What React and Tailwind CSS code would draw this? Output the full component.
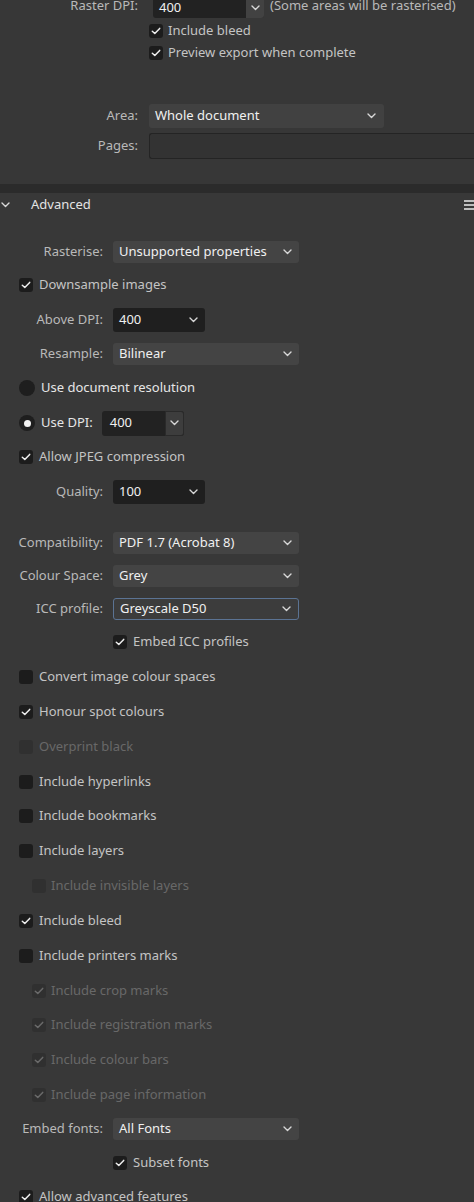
import React from "react";

const FONT = { fontFamily: '"Noto Sans", "Open Sans", sans-serif' };

function Chevron({ className = "" }) {
  return (
    <svg width="9" height="6" viewBox="0 0 9 6" className={className}>
      <polyline points="1,1 4.5,4.5 8,1" fill="none" stroke="#d8d8d8" strokeWidth="1.4" strokeLinecap="round" strokeLinejoin="round" />
    </svg>
  );
}

function Check({ checked, disabled }) {
  return (
    <div
      className={
        "w-[14px] h-[14px] rounded-[3px] flex items-center justify-center shrink-0 " +
        (disabled ? "bg-[#303030]" : "bg-[#1c1c1c]")
      }
    >
      {checked && (
        <svg width="10" height="8" viewBox="0 0 10 8">
          <polyline
            points="1.3,4.2 3.8,6.5 8.7,1.4"
            fill="none"
            stroke={disabled ? "#6a6a6a" : "#ededed"}
            strokeWidth="1.5"
            strokeLinecap="round"
            strokeLinejoin="round"
          />
        </svg>
      )}
    </div>
  );
}

function CheckRow({ mt, checked, disabled, indent, label }) {
  return (
    <div className={"flex items-center h-[24px] " + mt + " " + (indent ? "pl-[32px] gap-[5px]" : "pl-[19px] gap-[6px]")}>
      <Check checked={checked} disabled={disabled} />
      <span className={"text-[13px] " + (disabled ? "text-[#686868]" : "text-[#c4c4c4]")}>{label}</span>
    </div>
  );
}

function Select({ value, width, dark, focus }) {
  return (
    <div
      className={
        "h-[22px] rounded-[3px] flex items-center justify-between pl-[6px] pr-[7px] " +
        width +
        " " +
        (dark ? "bg-[#1f1f1f] h-[24px]" : focus ? "bg-[#3c3c3c] border border-[#5b7393]" : "bg-[#444444]")
      }
    >
      <span className="text-[13px] text-[#f0f0f0]">{value}</span>
      <Chevron />
    </div>
  );
}

function LabelRow({ mt, label, children }) {
  return (
    <div className={"flex items-center h-[24px] " + mt}>
      <div className="w-[103px] text-right text-[13px] text-[#b9b9b9] shrink-0">{label}</div>
      <div className="ml-[10px]">{children}</div>
    </div>
  );
}

export default function App() {
  return (
    <div className="w-[474px] h-[1202px] overflow-hidden bg-[#383838] select-none" style={FONT}>
      {/* Top section */}
      <div className="bg-[#373737]">
        <div className="flex items-center h-[24px] -mt-[6px]">
          <div className="w-[138px] text-right text-[13px] text-[#b9b9b9]">Raster DPI:</div>
          <div className="ml-[15px] w-[111px] h-[24px] rounded-[3px] bg-[#222222] flex">
            <div className="flex-1 flex items-center pl-[6px] pt-[3px] text-[13px] text-[#f0f0f0]">400</div>
            <div className="w-[18px] bg-[#424242] rounded-r-[3px] flex items-center justify-center pt-[3px]">
              <Chevron />
            </div>
          </div>
          <span className="ml-[6px] text-[13px] text-[#b9b9b9] whitespace-nowrap">(Some areas will be rasterised)</span>
        </div>
        <div className="flex items-center h-[22px] mt-[2px] pl-[149px] gap-[5px]">
          <Check checked />
          <span className="text-[13px] text-[#c4c4c4]">Include bleed</span>
        </div>
        <div className="flex items-center h-[22px] pl-[149px] gap-[5px]">
          <Check checked />
          <span className="text-[13px] text-[#c4c4c4]">Preview export when complete</span>
        </div>
        <div className="flex items-center h-[24px] mt-[40px]">
          <div className="w-[138px] text-right text-[13px] text-[#b9b9b9]">Area:</div>
          <div className="ml-[11px] w-[235px] h-[24px] rounded-[3px] bg-[#414141] flex items-center justify-between pl-[6px] pr-[8px]">
            <span className="text-[13px] text-[#f0f0f0]">Whole document</span>
            <Chevron />
          </div>
        </div>
        <div className="flex items-center h-[26px] mt-[5px]">
          <div className="w-[138px] text-right text-[13px] text-[#b9b9b9]">Pages:</div>
          <div className="ml-[11px] flex-1 h-[26px] rounded-l-[3px] bg-[#333333] border border-r-0 border-[#242424]" />
        </div>
        <div className="h-[25px]" />
      </div>
      <div className="h-[9px] bg-[#2b2b2b]" />
      {/* Advanced header */}
      <div className="h-[23px] flex items-center relative">
        <div className="pl-[1px] w-[31px]">
          <Chevron />
        </div>
        <span className="text-[13px] text-[#e4e4e4]">Advanced</span>
        <div className="ml-auto flex flex-col gap-[2px] w-[10px] pt-[1px]">
          <div className="h-[2px] bg-[#bdbdbd]" />
          <div className="h-[2px] bg-[#bdbdbd]" />
          <div className="h-[2px] bg-[#bdbdbd]" />
        </div>
      </div>

      <LabelRow mt="mt-[24px]" label="Rasterise:">
        <Select value="Unsupported properties" width="w-[186px]" />
      </LabelRow>
      <CheckRow mt="mt-[9px]" checked label="Downsample images" />
      <LabelRow mt="mt-[11px]" label="Above DPI:">
        <Select value="400" width="w-[92px]" dark />
      </LabelRow>
      <LabelRow mt="mt-[10px]" label="Resample:">
        <Select value="Bilinear" width="w-[186px]" />
      </LabelRow>
      <div className="flex items-center h-[24px] mt-[10px] pl-[19px] gap-[6px]">
        <div className="w-[16px] h-[16px] rounded-full bg-[#1e1e1e]" />
        <span className="text-[13px] text-[#e6e6e6]">Use document resolution</span>
      </div>
      <div className="flex items-center h-[24px] mt-[11px] pl-[19px]">
        <div className="w-[16px] h-[16px] rounded-full bg-[#1e1e1e] flex items-center justify-center">
          <div className="w-[7px] h-[7px] rounded-full bg-[#f0f0f0]" />
        </div>
        <span className="ml-[6px] text-[13px] text-[#e6e6e6]">Use DPI:</span>
        <div className="ml-[9px] w-[82px] h-[25px] rounded-[3px] bg-[#222222] flex">
          <div className="flex-1 flex items-center pl-[8px] text-[13px] text-[#f0f0f0]">400</div>
          <div className="w-[19px] bg-[#3d3d3d] border border-[#2a2a2a] rounded-r-[3px] flex items-center justify-center">
            <Chevron />
          </div>
        </div>
      </div>
      <CheckRow mt="mt-[10px]" checked label="Allow JPEG compression" />
      <LabelRow mt="mt-[11px]" label="Quality:">
        <Select value="100" width="w-[92px]" dark />
      </LabelRow>
      <LabelRow mt="mt-[27px]" label="Compatibility:">
        <Select value="PDF 1.7 (Acrobat 8)" width="w-[186px]" />
      </LabelRow>
      <LabelRow mt="mt-[9px]" label="Colour Space:">
        <Select value="Grey" width="w-[186px]" />
      </LabelRow>
      <LabelRow mt="mt-[9px]" label="ICC profile:">
        <Select value="Greyscale D50" width="w-[186px]" focus />
      </LabelRow>
      <div className="flex items-center h-[24px] mt-[9px] pl-[113px] gap-[6px]">
        <Check checked />
        <span className="text-[13px] text-[#c4c4c4]">Embed ICC profiles</span>
      </div>
      <CheckRow mt="mt-[11px]" label="Convert image colour spaces" />
      <CheckRow mt="mt-[11px]" checked label="Honour spot colours" />
      <CheckRow mt="mt-[11px]" disabled label="Overprint black" />
      <CheckRow mt="mt-[11px]" label="Include hyperlinks" />
      <CheckRow mt="mt-[10px]" label="Include bookmarks" />
      <CheckRow mt="mt-[11px]" label="Include layers" />
      <CheckRow mt="mt-[11px]" disabled indent label="Include invisible layers" />
      <CheckRow mt="mt-[11px]" checked label="Include bleed" />
      <CheckRow mt="mt-[11px]" label="Include printers marks" />
      <CheckRow mt="mt-[11px]" checked disabled indent label="Include crop marks" />
      <CheckRow mt="mt-[10px]" checked disabled indent label="Include registration marks" />
      <CheckRow mt="mt-[11px]" checked disabled indent label="Include colour bars" />
      <CheckRow mt="mt-[11px]" checked disabled indent label="Include page information" />
      <LabelRow mt="mt-[10px]" label="Embed fonts:">
        <Select value="All Fonts" width="w-[186px]" />
      </LabelRow>
      <div className="flex items-center h-[24px] mt-[10px] pl-[113px] gap-[6px]">
        <Check checked />
        <span className="text-[13px] text-[#c4c4c4]">Subset fonts</span>
      </div>
      <CheckRow mt="mt-[10px]" checked label="Allow advanced features" />
    </div>
  );
}
